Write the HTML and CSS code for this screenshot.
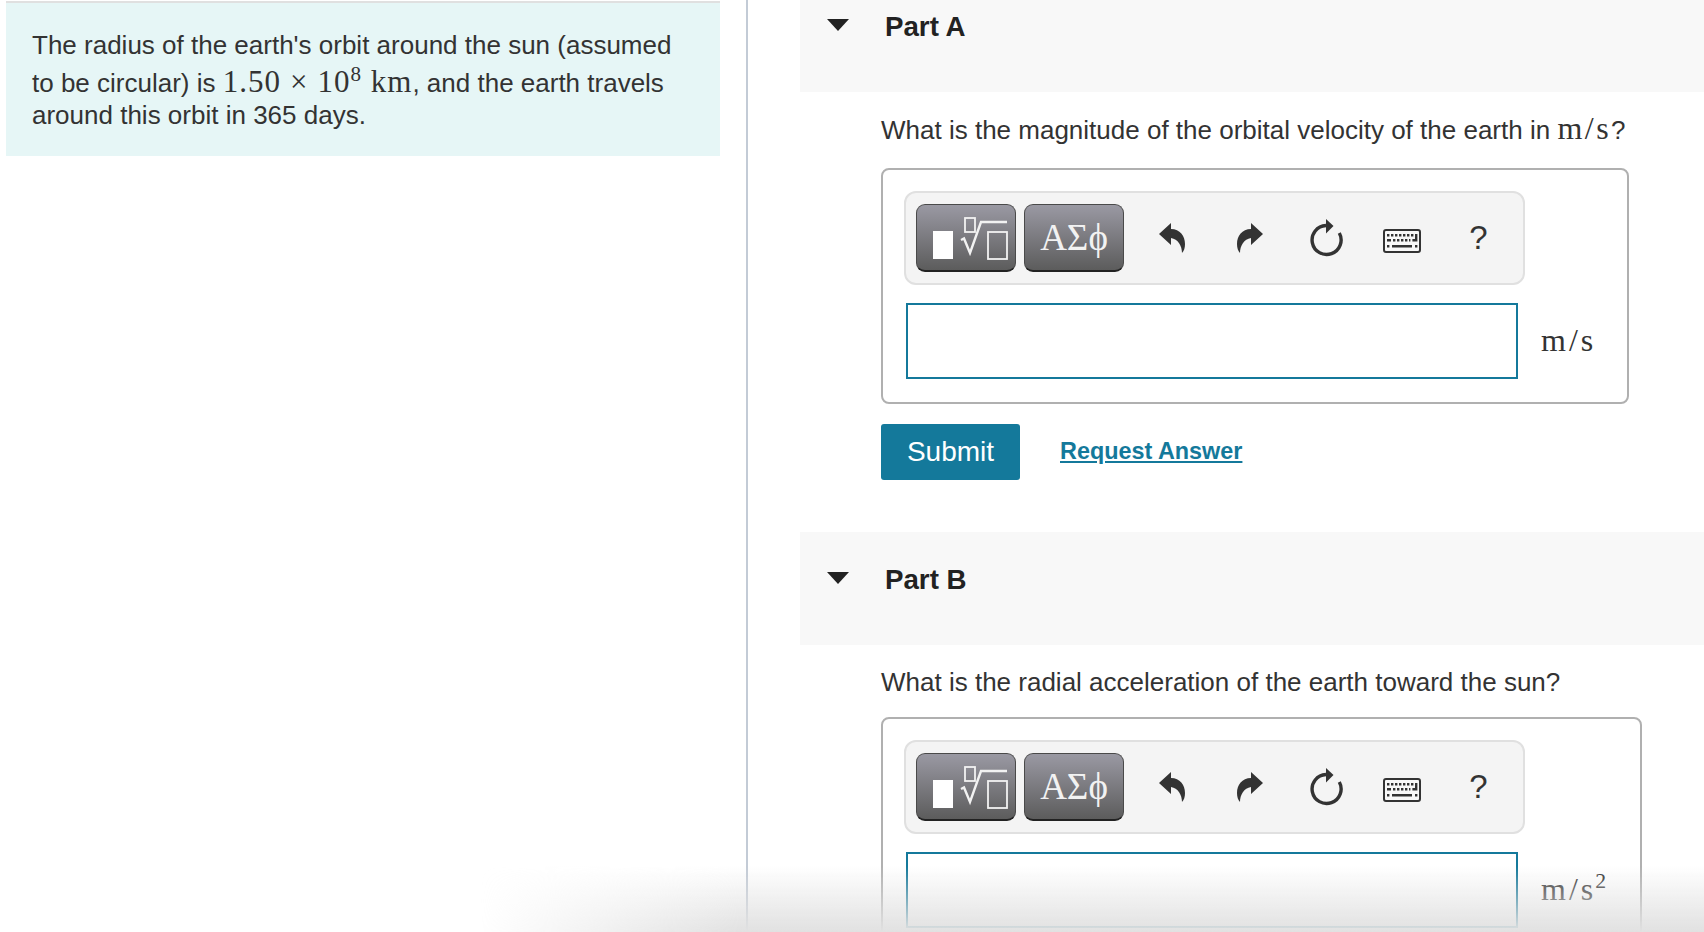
FILE: index.html
```html
<!DOCTYPE html>
<html>
<head>
    <meta charset="UTF-8">
    <title>Part A and Part B</title>
    <link rel="stylesheet" href="styles.css">
</head>
<body>
    <svg class="defs">
        <symbol id="i-matrix" viewBox="0 0 99 68">
            <rect x="16" y="26" width="20" height="28" fill="#fff"/>
            <rect x="48" y="13" width="10" height="14" fill="none" stroke="#f2f2f2" stroke-width="1.8"/>
            <path d="M44 35 L47 33.5 L53 48 L64 17 H90" fill="none" stroke="#f2f2f2" stroke-width="2.4"/>
            <rect x="71" y="27" width="19" height="27" fill="none" stroke="#f2f2f2" stroke-width="1.8"/>
        </symbol>
        <symbol id="i-undo" viewBox="0 0 28 32">
            <path d="M1 12 L13 1 V7 C22 7 27 14 27 22 C27 26 26 29 24 31 C24 24 20 17 13 16 V23 Z" fill="#333"/>
        </symbol>
        <symbol id="i-redo" viewBox="0 0 28 32">
            <path d="M27 12 L15 1 V7 C6 7 1 14 1 22 C1 26 2 29 4 31 C4 24 8 17 15 16 V23 Z" fill="#333"/>
        </symbol>
        <symbol id="i-reset" viewBox="0 0 34 38">
            <path d="M17 6.5 A14.5 14.5 0 1 0 30.3 14" fill="none" stroke="#333" stroke-width="3.4"/>
            <path d="M17 0 L24.5 7 L17 14.5 Z" fill="#333"/>
        </symbol>
        <symbol id="i-keys" viewBox="0 0 38 24">
            <rect x="1" y="1" width="36" height="22" rx="2" fill="#f8f8f8" stroke="#333" stroke-width="2"/>
            <path d="M4 5h2.4v2.4h-2.4zM8 5h2.4v2.4h-2.4zM12 5h2.4v2.4h-2.4zM16 5h2.4v2.4h-2.4zM20 5h2.4v2.4h-2.4zM24 5h2.4v2.4h-2.4zM28 5h2.4v2.4h-2.4zM32 5h2.4v7.4h-5v-2.4h2.6z" fill="#333"/>
            <path d="M4 10h4v2.4h-4zM10 10h2.4v2.4h-2.4zM14 10h2.4v2.4h-2.4zM18 10h2.4v2.4h-2.4zM22 10h2.4v2.4h-2.4zM26 10h1.4v2.4h-1.4z" fill="#333"/>
            <path d="M4 16h2.4v2.4h-2.4zM9 16h20v2.4h-20zM32 16h2.4v2.4h-2.4z" fill="#333"/>
        </symbol>
    </svg>

    <div class="page">
        <div class="intro-col">
            <div class="intro">
                The radius of the earth's orbit around the sun (assumed<br>
                to be circular) is <span class="math math-big">1.50<span class="times">×</span>10<sup>8</sup> km</span>, and the earth travels<br>
                around this orbit in 365 days.
            </div>
        </div>

        <div class="parts-col">
            <div class="part-head">
                <span class="caret"></span>
                <h2>Part A</h2>
            </div>
            <div class="part-body">
                <p class="question">What is the magnitude of the orbital velocity of the earth in <span class="math">m/s</span>?</p>
                <div class="answer-box">
                    <div class="toolbar">
                        <button class="tool-btn"><svg class="btn-icon"><use href="#i-matrix"/></svg></button>
                        <button class="tool-btn greek">ΑΣϕ</button>
                        <span class="slot first"><svg class="undo"><use href="#i-undo"/></svg></span>
                        <span class="slot"><svg class="undo"><use href="#i-redo"/></svg></span>
                        <span class="slot"><svg class="reset"><use href="#i-reset"/></svg></span>
                        <span class="slot"><svg class="keys"><use href="#i-keys"/></svg></span>
                        <span class="slot help">?</span>
                    </div>
                    <div class="answer-row">
                        <div class="answer-input"></div>
                        <span class="math unit">m/s</span>
                    </div>
                </div>
                <div class="actions">
                    <a class="submit">Submit</a>
                    <a class="request">Request Answer</a>
                </div>
            </div>

            <div class="part-head part-b">
                <span class="caret"></span>
                <h2>Part B</h2>
            </div>
            <div class="part-body">
                <p class="question q-b">What is the radial acceleration of the earth toward the sun?</p>
                <div class="answer-box">
                    <div class="toolbar">
                        <button class="tool-btn"><svg class="btn-icon"><use href="#i-matrix"/></svg></button>
                        <button class="tool-btn greek">ΑΣϕ</button>
                        <span class="slot first"><svg class="undo"><use href="#i-undo"/></svg></span>
                        <span class="slot"><svg class="undo"><use href="#i-redo"/></svg></span>
                        <span class="slot"><svg class="reset"><use href="#i-reset"/></svg></span>
                        <span class="slot"><svg class="keys"><use href="#i-keys"/></svg></span>
                        <span class="slot help">?</span>
                    </div>
                    <div class="answer-row">
                        <div class="answer-input"></div>
                        <span class="math unit">m/s<sup>2</sup></span>
                    </div>
                </div>
            </div>
        </div>
    </div>

    <div class="bottom-shade"></div>
</body>
</html>
```

FILE: styles.css
```css
* {
    margin: 0;
    padding: 0;
    box-sizing: border-box;
}
html, body {
    height: 932px;
    overflow: hidden;
    background: #fff;
}
body {
    font-family: "Liberation Sans", Arial, sans-serif;
    color: #333;
}
.defs {
    display: none;
}
.page {
    display: flex;
    height: 932px;
}

/* left column */
.intro-col {
    flex: 0 0 748px;
    padding: 1px 26px 0 6px;
    border-right: 2px solid #c3cbd6;
}
.intro {
    height: 155px;
    padding: 27px 26px 0;
    background: #e6f6f6;
    border-top: 2px solid #e0e0e0;
    font-size: 26px;
    line-height: 31px;
}
.math {
    font-family: "Liberation Serif", "Times New Roman", serif;
    letter-spacing: 1px;
}
.math-big {
    font-size: 31px;
    line-height: 36px;
}
.times {
    margin: 0 9px;
}
.math sup {
    font-size: 68%;
    line-height: 0;
}
.math-big sup {
    line-height: 27px;
}

/* right column */
.parts-col {
    flex: 1;
    margin-top: -20px;
    padding-left: 52px;
}
.part-head {
    display: flex;
    align-items: center;
    height: 112px;
    padding: 0 0 18px 27px;
    background: #f8f8f8;
}
.part-b {
    height: 113px;
}
.caret {
    width: 0;
    height: 0;
    margin-right: 36px;
    border-left: 11px solid transparent;
    border-right: 11px solid transparent;
    border-top: 12px solid #222;
    transform: translateY(-2px);
}
.part-head h2 {
    font-size: 27.7px;
    line-height: 32px;
    color: #222;
}
.part-body {
    padding-left: 81px;
}
.question {
    height: 76px;
    padding-top: 19px;
    font-size: 26px;
    line-height: 34px;
}
.question .math {
    font-size: 32px;
    letter-spacing: 2.5px;
}
.q-b {
    height: 72px;
    padding-top: 20px;
}

.answer-box {
    width: fit-content;
    padding: 21px 31px 23px 21px;
    border: 2px solid #b0b0b0;
    border-radius: 8px;
}
.toolbar {
    display: flex;
    align-items: center;
    width: 621px;
    height: 94px;
    padding-left: 10px;
    background: #f4f4f4;
    border: 2px solid #e0e0e0;
    border-radius: 12px;
}
.tool-btn {
    width: 100px;
    height: 68px;
    margin-right: 8px;
    background: linear-gradient(#9a99a3, #5c5c5c);
    border: 1px solid #4a4a4a;
    border-bottom: 2px solid #222;
    border-radius: 9px;
    color: #f2f2f2;
}
.btn-icon {
    display: block;
    width: 99px;
    height: 68px;
}
.greek {
    font-family: "Liberation Serif", serif;
    font-size: 37px;
}
.slot {
    display: flex;
    align-items: center;
    justify-content: center;
    width: 76px;
}
.slot.first {
    margin-left: 4px;
    padding-right: 4px;
}
.undo {
    width: 28px;
    height: 32px;
}
.reset {
    width: 34px;
    height: 38px;
}
.keys {
    width: 38px;
    height: 24px;
    margin-top: 6px;
}
.help {
    padding-left: 1px;
    font-size: 33px;
    color: #333;
}
.answer-row {
    display: flex;
    align-items: center;
    margin-top: 18px;
    margin-left: 2px;
}
.answer-input {
    width: 612px;
    height: 76px;
    border: 2px solid #14799b;
    background: #fff;
}
.unit {
    margin-left: 23px;
    padding-bottom: 2px;
    font-size: 32px;
    letter-spacing: 3px;
}
.unit sup {
    letter-spacing: 0;
    margin-left: -1px;
    margin-right: 3px;
}

.actions {
    display: flex;
    align-items: center;
    height: 56px;
    margin-top: 20px;
    margin-bottom: 52px;
}
.submit {
    width: 139px;
    height: 56px;
    background: #14799b;
    border-radius: 3px;
    color: #fff;
    font-size: 28px;
    line-height: 56px;
    text-align: center;
}
.request {
    margin-left: 40px;
    margin-bottom: 2px;
    color: #14799b;
    font-size: 23.4px;
    font-weight: bold;
    text-decoration: underline;
}

/* shadow that lies over the bottom of the page */
.bottom-shade {
    position: fixed;
    left: 480px;
    right: 0;
    bottom: 0;
    height: 66px;
    background: linear-gradient(rgba(225, 225, 225, 0), rgba(225, 225, 225, 1));
    -webkit-mask-image: linear-gradient(to right, transparent, #000 260px);
    mask-image: linear-gradient(to right, transparent, #000 260px);
    pointer-events: none;
}
```
